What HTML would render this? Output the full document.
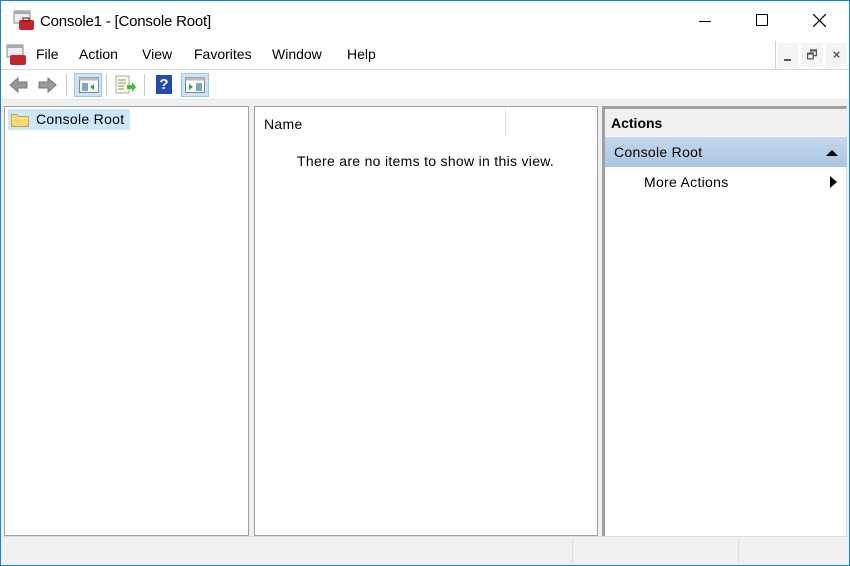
<!DOCTYPE html>
<html><head><style>
*{margin:0;padding:0;box-sizing:border-box}
body{width:850px;height:566px;overflow:hidden;font-family:"Liberation Sans",sans-serif;font-size:14px;color:#000;background:#1883d7}
.win{position:absolute;left:1px;top:1px;width:848px;height:564px;background:#f0f0f0}
.title{position:absolute;left:0;top:0;width:848px;height:40px;background:#fff}
.menu{position:absolute;left:0;top:40px;width:848px;height:29px;background:#fff;border-bottom:1px solid #d9d9d9}
.tb{position:absolute;left:0;top:69px;width:848px;height:30px;background:#fff;border-bottom:1px solid #e3e3e3}
.t{position:absolute;white-space:nowrap}
.pane .t,.ap .t{letter-spacing:0.3px}
.pane{position:absolute;background:#fff;border:1px solid #a0a0a0}
</style></head><body><div class="win">
<div class="title">
<svg style="position:absolute;left:12px;top:9px" width="22" height="22"><rect x="1" y="1" width="16" height="12" fill="#eee" stroke="#888"/><rect x="1" y="1" width="16" height="3" fill="#aaa"/><rect x="6" y="10" width="15" height="10" rx="2" fill="#c0272d"/><rect x="10" y="8" width="6" height="3" fill="none" stroke="#801"/></svg>
<div class="t" style="left:39px;top:12px;font-size:15px;letter-spacing:-0.2px">Console1 - [Console Root]</div>
<div style="position:absolute;left:698px;top:20px;width:12px;height:1px;background:#000"></div>
<div style="position:absolute;left:755px;top:13px;width:12px;height:12px;border:1px solid #000"></div>
<svg style="position:absolute;left:812px;top:13px" width="13" height="13"><path d="M0 0L13 13M13 0L0 13" stroke="#000" stroke-width="1.2"/></svg>
</div>
<div class="menu">
<svg style="position:absolute;left:5px;top:3px" width="22" height="22"><rect x="1" y="1" width="16" height="12" fill="#eee" stroke="#888"/><rect x="1" y="1" width="16" height="3" fill="#aaa"/><rect x="4" y="11" width="16" height="10" rx="2" fill="#c0272d"/></svg>
<div class="t" style="left:35px;top:5px">File</div>
<div class="t" style="left:78px;top:5px">Action</div>
<div class="t" style="left:141px;top:5px">View</div>
<div class="t" style="left:193px;top:5px">Favorites</div>
<div class="t" style="left:271px;top:5px">Window</div>
<div class="t" style="left:346px;top:5px">Help</div>
<div style="position:absolute;left:774px;top:0;width:1px;height:28px;background:#d0d0d0"></div>
<div style="position:absolute;left:777px;top:2px;width:20px;height:24px;background:#f4f4f4"></div>
<div style="position:absolute;left:783px;top:18px;width:7px;height:2px;background:#555"></div>
<div style="position:absolute;left:800px;top:2px;width:22px;height:24px;background:#f4f4f4;color:#555;font-size:12px;text-align:center;line-height:24px">🗗</div>
<div style="position:absolute;left:825px;top:2px;width:21px;height:24px;background:#f4f4f4;color:#555;font-size:13px;font-weight:bold;text-align:center;line-height:24px">×</div>
</div>
<div class="tb">
<svg style="position:absolute;left:7px;top:5px" width="50" height="20"><path d="M2 10L10 3V7H19V13H10V17Z" fill="#999" stroke="#777"/><path d="M48 10L40 3V7H31V13H40V17Z" fill="#999" stroke="#777"/></svg>
<div style="position:absolute;left:65px;top:4px;width:1px;height:22px;background:#ccc"></div>
<div style="position:absolute;left:73px;top:3px;width:28px;height:24px;background:#cce4f7;border:1px solid #99c9ef"></div>
<svg style="position:absolute;left:78px;top:7px" width="20" height="17"><rect x="0.5" y="0.5" width="19" height="15" fill="#fff" stroke="#888"/><rect x="0.5" y="0.5" width="19" height="3" fill="#bbb"/><rect x="3" y="6" width="6" height="8" fill="#7ab"/><path d="M15 7L11 10L15 13Z" fill="#2a2"/></svg>
<div style="position:absolute;left:105px;top:4px;width:1px;height:22px;background:#ccc"></div>
<svg style="position:absolute;left:114px;top:5px" width="22" height="20"><rect x="1" y="1" width="13" height="17" fill="#fffbe0" stroke="#aaa"/><path d="M3 5H11M3 8H11M3 11H9M3 14H9" stroke="#888"/><path d="M12 10H17V7L21 12L17 17V14H12Z" fill="#4b4"/></svg>
<div style="position:absolute;left:143px;top:4px;width:1px;height:22px;background:#ccc"></div>
<div style="position:absolute;left:155px;top:5px;width:16px;height:19px;background:#2549b4;color:#fff;font-weight:bold;font-size:15px;text-align:center;line-height:19px">?</div>
<div style="position:absolute;left:180px;top:3px;width:28px;height:24px;background:#cce4f7;border:1px solid #99c9ef"></div>
<svg style="position:absolute;left:184px;top:7px" width="20" height="17"><rect x="0.5" y="0.5" width="19" height="15" fill="#fff" stroke="#888"/><rect x="0.5" y="0.5" width="19" height="3" fill="#bbb"/><rect x="11" y="6" width="6" height="8" fill="#7ab"/><path d="M4 7L8 10L4 13Z" fill="#2a2"/></svg>
</div>
<div class="pane" style="left:3px;top:105px;width:245px;height:430px">
<div style="position:absolute;left:3px;top:2px;width:122px;height:21px;background:#cce8ff"></div>
<svg style="position:absolute;left:6px;top:5px" width="18" height="15"><path d="M0.5 2.5H6L8 4.5H17.5V14.5H0.5Z" fill="#f8d775" stroke="#c9a33e"/><path d="M0.5 6.5H17.5" stroke="#fbe7a8"/></svg>
<div class="t" style="left:31px;top:4px">Console Root</div>
</div>
<div class="pane" style="left:253px;top:105px;width:344px;height:430px">
<div class="t" style="left:9px;top:9px">Name</div>
<div style="position:absolute;left:250px;top:1px;width:1px;height:29px;background:#e5e5e5"></div>
<div class="t" style="left:42px;top:46px">There are no items to show in this view.</div>
</div>
<div class="ap" style="position:absolute;left:601px;top:105px;width:245px;height:430px;background:#fff;border-left:3px solid #a0a0a0;border-top:3px solid #a0a0a0;border-right:1px solid #e0e0e0">
<div style="position:absolute;left:0;top:0;width:242px;height:27px;background:#f0f0f0"></div>
<div class="t" style="left:6px;top:6px;font-weight:bold;letter-spacing:0">Actions</div>
<div style="position:absolute;left:0;top:28px;width:242px;height:30px;background:linear-gradient(#c4d9ed,#a9c5e2)"></div>
<div class="t" style="left:9px;top:35px">Console Root</div>
<svg style="position:absolute;left:221px;top:40px" width="12" height="7"><path d="M0 7L6 1L12 7Z" fill="#000"/></svg>
<div class="t" style="left:39px;top:65px">More Actions</div>
<svg style="position:absolute;left:225px;top:67px" width="7" height="12"><path d="M0 0L7 6L0 12Z" fill="#000"/></svg>
</div>
<div style="position:absolute;left:1px;top:535px;width:846px;height:28px;border-top:1px solid #ddd">
<div style="position:absolute;left:570px;top:2px;width:1px;height:24px;background:#ddd"></div>
<div style="position:absolute;left:736px;top:2px;width:1px;height:24px;background:#ddd"></div>
</div>
</div></body></html>
